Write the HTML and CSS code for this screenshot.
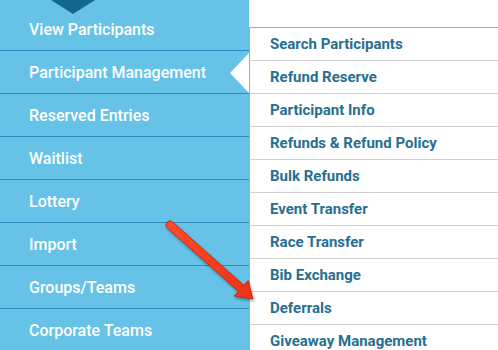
FILE: index.html
```html
<!DOCTYPE html>
<html>
<head>
<meta charset="utf-8">
<link rel="stylesheet" href="styles.css">
</head>
<body>
<div class="page">
  <nav class="sidebar">
    <div class="sidebar-top"></div>
    <ul class="side-list">
      <li class="side-item">View Participants</li>
      <li class="side-item active">Participant Management</li>
      <li class="side-item">Reserved Entries</li>
      <li class="side-item">Waitlist</li>
      <li class="side-item">Lottery</li>
      <li class="side-item">Import</li>
      <li class="side-item">Groups/Teams</li>
      <li class="side-item">Corporate Teams</li>
    </ul>
    <span class="chevron"></span>
  </nav>
  <ul class="submenu">
    <li class="sub-item">Search Participants</li>
    <li class="sub-item">Refund Reserve</li>
    <li class="sub-item">Participant Info</li>
    <li class="sub-item">Refunds &amp; Refund Policy</li>
    <li class="sub-item">Bulk Refunds</li>
    <li class="sub-item">Event Transfer</li>
    <li class="sub-item">Race Transfer</li>
    <li class="sub-item">Bib Exchange</li>
    <li class="sub-item">Deferrals</li>
    <li class="sub-item">Giveaway Management</li>
  </ul>
  <svg class="annotation" width="498" height="350" viewBox="0 0 498 350">
    <defs>
      <linearGradient id="red" x1="0" y1="0" x2="1" y2="1">
        <stop offset="0" stop-color="#ff4b2b"/>
        <stop offset="1" stop-color="#ec3216"/>
      </linearGradient>
      <filter id="shadow" x="-20%" y="-20%" width="140%" height="140%">
        <feDropShadow dx="1" dy="2" stdDeviation="1.5" flood-color="#000" flood-opacity="0.35"/>
      </filter>
    </defs>
    <g filter="url(#shadow)">
      <path d="M167.3 228 L238.4 291.3 L234.1 296.1 L253 299 L248.1 280.5 L243.8 285.3 L172.7 222 A4 4 0 0 0 167.3 228 Z" fill="url(#red)" stroke="#c0200b" stroke-width="0.8" stroke-linejoin="round"/>
    </g>
  </svg>
</div>
</body>
</html>
```
FILE: styles.css
```css
html, body {
  margin: 0;
  padding: 0;
  background: #ffffff;
  overflow: hidden;
}

.page {
  position: relative;
  width: 498px;
  height: 350px;
  display: flex;
  align-items: flex-start;
  font-family: Roboto, "Liberation Sans", Arial, sans-serif;
}

.sidebar {
  position: relative;
  width: 249px;
  flex: none;
  height: 350px;
  background: #67c2e8;
}

.sidebar-top {
  height: 8px;
}

.side-list {
  list-style: none;
  margin: 0;
  padding: 0;
}

.side-item {
  position: relative;
  height: 42px;
  line-height: 43px;
  padding-left: 29px;
  border-bottom: 1px solid #2b8dbf;
  color: #ffffff;
  font-size: 16px;
  font-weight: 500;
  white-space: nowrap;
}

.side-item.active::after {
  content: "";
  position: absolute;
  right: 0;
  top: 2px;
  width: 0;
  height: 0;
  border-top: 20px solid transparent;
  border-bottom: 20px solid transparent;
  border-right: 19px solid #ffffff;
}

.chevron {
  position: absolute;
  left: 51px;
  top: 0;
  width: 0;
  height: 0;
  border-left: 22px solid transparent;
  border-right: 22px solid transparent;
  border-top: 14px solid #12678f;
}

.submenu {
  list-style: none;
  margin: 27px 0 0 0;
  padding: 0;
  flex: 1;
  border-top: 1px solid #a9a9a9;
  border-left: 1px solid #a9a9a9;
  background: #ffffff;
}

.sub-item {
  height: 32px;
  line-height: 33px;
  padding-left: 20px;
  border-bottom: 1px solid #d2d2d2;
  color: #276f8f;
  font-size: 15px;
  font-weight: 700;
  white-space: nowrap;
}

.annotation {
  position: absolute;
  left: 0;
  top: 0;
  pointer-events: none;
}
```
